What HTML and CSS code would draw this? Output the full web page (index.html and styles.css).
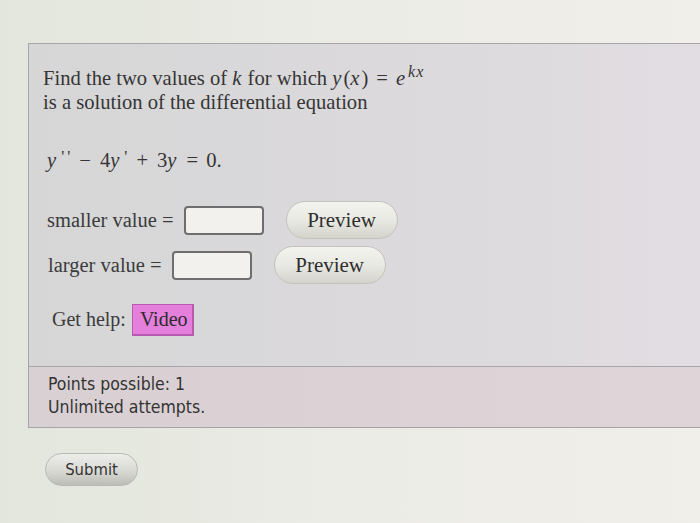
FILE: index.html
```html
<!DOCTYPE html>
<html>
<head>
<meta charset="utf-8">
<link rel="stylesheet" href="styles.css">
</head>
<body>
<div class="wrap">
  <div class="question">
    <p class="intro">Find the two values of <i class="mv">k</i> for which <span class="math"><i class="mv">y</i>(<i class="mv">x</i>)<span class="rel">=</span><i class="mv">e</i><sup><i>kx</i></sup></span><br>is a solution of the differential equation</p>
    <p class="eq"><i class="mv">y</i><span class="pr">'</span><span class="pr">'</span><span class="op">−</span>4<i class="mv">y</i><span class="pr">'</span><span class="op">+</span>3<i class="mv">y</i><span class="rel">=</span>0.</p>
    <div class="row row1">
      <span class="label">smaller value =</span>
      <span class="input"></span>
      <span class="btn">Preview</span>
    </div>
    <div class="row row2">
      <span class="label">larger value =</span>
      <span class="input"></span>
      <span class="btn">Preview</span>
    </div>
    <div class="help">
      <span class="label">Get help:</span>
      <span class="video">Video</span>
    </div>
  </div>
  <div class="points">
    <div>Points possible: 1</div>
    <div>Unlimited attempts.</div>
  </div>
  <div class="submit-row">
    <span class="submit">Submit</span>
  </div>
</div>
</body>
</html>
```
FILE: styles.css
```css
html, body {
  margin: 0;
  padding: 0;
}
body {
  width: 700px;
  height: 523px;
  overflow: hidden;
  background: linear-gradient(90deg, #e2e6dc 0%, #eaebe4 40%, #f1efea 100%);
  font-family: "Liberation Serif", serif;
  color: #353535;
}
.wrap {
  padding-top: 43px;
  padding-left: 28px;
}
.question {
  background: linear-gradient(90deg, #d6d6d7 0%, #dbd9db 50%, #e1dde2 100%);
  border: 1px solid #a6a5a8;
  border-right: none;
  padding: 22px 0 31px 14px;
  font-size: 20.6px;
}
.intro {
  margin: 0;
  line-height: 24px;
}
.mv {
  padding-right: 1px;
}
.rel {
  margin: 0 8px;
}
.math .mv {
  padding-right: 2px;
}
.intro sup {
  font-size: 16px;
  line-height: 0;
  vertical-align: 8px;
  margin-left: 1px;
  letter-spacing: 1px;
}
.eq {
  margin: 34px 0 0 4px;
  line-height: 24px;
}
.eq .mv {
  padding-right: 2px;
}
.pr {
  font-size: 17px;
  vertical-align: 5px;
  line-height: 0;
  margin-left: 3px;
}
.op {
  margin: 0 9px;
}
.row {
  display: flex;
  align-items: center;
  height: 38px;
  margin-left: 4px;
}
.row1 {
  margin-top: 29px;
}
.row2 {
  margin-top: 7px;
  margin-left: 5px;
}
.label {
  color: #3b3b3b;
  font-size: 20.5px;
}
.input {
  display: inline-block;
  width: 76px;
  height: 25px;
  margin-left: 10px;
  border: 2px solid #6f6e6e;
  border-radius: 4px;
  background: #f3f1ee;
}
.btn {
  display: inline-flex;
  align-items: center;
  justify-content: center;
  width: 110px;
  height: 36px;
  margin-left: 22px;
  border: 1px solid #c3c3be;
  border-radius: 19px;
  background: linear-gradient(180deg, #f4f4ef 0%, #e9e9e3 50%, #d4d4cd 100%);
  color: #2e2e2e;
  font-size: 21px;
}
.help {
  display: flex;
  align-items: center;
  margin-top: 20px;
  margin-left: 9px;
  height: 31px;
}
.help .label {
  font-size: 20px;
}
.video {
  display: inline-flex;
  align-items: center;
  height: 29px;
  margin-left: 6px;
  padding: 0 4px 0 7px;
  background: #e47fdc;
  border: 1px solid #b75ab0;
  border-bottom-width: 2px;
  border-right-width: 2px;
  color: #2b2b2b;
  font-size: 20px;
}
.points {
  background: linear-gradient(90deg, #d9d0d4 0%, #dcd1d4 50%, #dfd4d8 100%);
  border: 1px solid #a7a2a6;
  border-right: none;
  border-top: none;
  padding: 6px 0 8px 19px;
  font-family: "DejaVu Sans Condensed", "DejaVu Sans", sans-serif;
  font-size: 17.5px;
  line-height: 23px;
  color: #333;
  height: 46px;
}
.submit-row {
  padding-top: 25px;
  padding-left: 17px;
}
.submit {
  display: inline-flex;
  align-items: center;
  justify-content: center;
  width: 91px;
  height: 31px;
  border: 1px solid #b9b9b3;
  border-radius: 17px;
  background: linear-gradient(180deg, #ededea 0%, #d9d9d4 55%, #bdbdb7 100%);
  font-family: "DejaVu Sans Condensed", "DejaVu Sans", sans-serif;
  font-size: 16.5px;
  color: #333;
}
```
